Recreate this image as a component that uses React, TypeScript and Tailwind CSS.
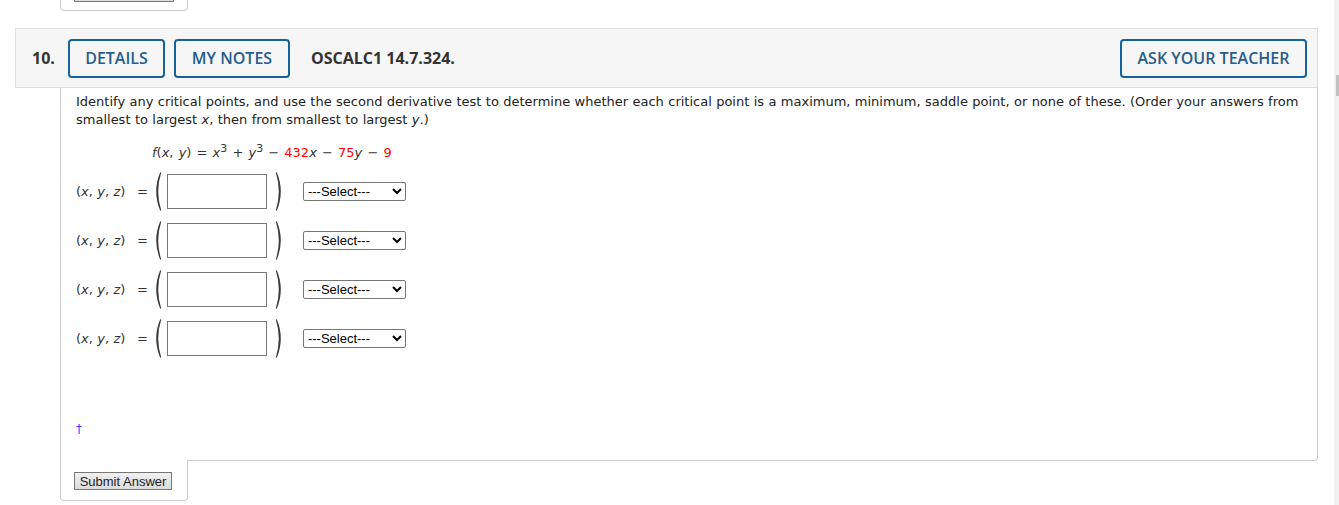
import React from 'react';

const verdana = { fontFamily: '"DejaVu Sans", Verdana, sans-serif' };

const V = ({ children }: { children: React.ReactNode }) => <i className="italic">{children}</i>;

// tall delimiters, drawn like the stretched glyphs in the reference
function Paren({ right }: { right?: boolean }) {
  return (
    <svg width="9" height="39" viewBox="0 0 9 39" className={right ? 'scale-x-[-1]' : ''}>
      <path d="M7.2 0.3 Q-0.8 19.5 7.2 38.7 L8.2 38.4 Q2.2 19.5 8.2 0.6 Z" fill="#3a3a3a" />
    </svg>
  );
}

function AnswerRow() {
  return (
    <div className="flex items-center h-[39px]">
      <span className="text-[#333] w-[61px]">
        (<V>x</V>, <V>y</V>, <V>z</V>)
      </span>
      <span className="text-[#333]">=</span>
      <div className="ml-[5px] flex">
        <Paren />
      </div>
      <input
        type="text"
        className="ml-[5px] w-[100px] h-[35px] border border-[#777] bg-white"
      />
      <div className="ml-[8px] flex">
        <Paren right />
      </div>
      <select
        className="ml-[19px] w-[103px] h-[19px] border border-[#767676] rounded-[2px] bg-white text-[13px] text-black"
        style={{ fontFamily: '"Liberation Sans", Arial, sans-serif' }}
        defaultValue=""
      >
        <option value="">---Select---</option>
        <option>maximum</option>
        <option>minimum</option>
        <option>saddle point</option>
        <option>none of these</option>
      </select>
    </div>
  );
}

function HeaderButton({ label, width }: { label: string; width: string }) {
  return (
    <button
      className={`${width} h-[39px] flex items-center justify-center border-2 border-[#15639c] rounded-[4px] text-[#275d8c] text-[16px] font-semibold uppercase`}
    >
      {label}
    </button>
  );
}

export default function App() {
  return (
    <div className="flex bg-white w-[1339px] h-[505px] overflow-hidden">
      <div className="w-[1334px]">
        {/* previous question tail */}
        <div className="ml-[60px] w-[128px] h-[11px] border-x border-b border-[#ccc] rounded-b-[4px]">
          <div className="ml-[13px] w-[100px] h-[2px] border-x border-b border-[#777] bg-[#ddd]" />
        </div>

        {/* header */}
        <div
          className="mt-[17px] ml-[15px] w-[1303px] h-[60px] border border-[#ddd] bg-[#f6f6f6] flex items-center justify-between pl-[16px] pr-[10px]"
          style={{ fontFamily: '"Open Sans", sans-serif' }}
        >
          <div className="flex items-center">
            <span className="text-[16px] font-bold text-[#333] w-[36px]">10.</span>
            <HeaderButton label="Details" width="w-[97px]" />
            <div className="w-[9px]" />
            <HeaderButton label="My Notes" width="w-[116px]" />
            <span className="ml-[21px] text-[16px] font-bold text-[#333]">OSCALC1 14.7.324.</span>
          </div>
          <HeaderButton label="Ask Your Teacher" width="w-[187px]" />
        </div>

        {/* question body */}
        <div
          className="ml-[60px] w-[1258px] h-[373px] border-x border-b border-[#ccc] rounded-br-[4px] px-[15px] pt-[5px] text-[13px] leading-[18px] text-[#222] [word-spacing:0.25px]"
          style={verdana}
        >
          <p>
            Identify any critical points, and use the second derivative test to determine whether each critical point is a
            maximum, minimum, saddle point, or none of these. (Order your answers from smallest to largest <V>x</V>, then
            from smallest to largest <V>y</V>.)
          </p>

          <div className="mt-[15px] ml-[76px] text-[#333] [word-spacing:1px]">
            <V>f</V>(<V>x</V>, <V>y</V>) = <V>x</V>
            <sup className="text-[11px]">3</sup> + <V>y</V>
            <sup className="text-[11px]">3</sup> − <span className="text-[#f00]">432</span>
            <V>x</V> − <span className="text-[#f00]">75</span>
            <V>y</V> − <span className="text-[#f00]">9</span>
          </div>

          <div className="mt-[10px] flex flex-col gap-[10px]">
            <AnswerRow />
            <AnswerRow />
            <AnswerRow />
            <AnswerRow />
          </div>

          <div className="mt-[62px] text-[12px] text-[#3a3aff]">†</div>
        </div>

        {/* submit tab */}
        <div className="relative -mt-px ml-[60px] w-[128px] h-[41px] border-x border-b border-[#ccc] rounded-b-[4px] bg-white pl-[13px] pt-[12px] flex items-start">
          <button
            className="w-[98px] h-[18px] border border-[#767676] bg-gradient-to-b from-[#f0f0f0] to-[#dcdcdc] text-[13px] text-[#222] leading-none"
            style={{ fontFamily: '"Liberation Sans", Arial, sans-serif' }}
          >
            Submit Answer
          </button>
        </div>
      </div>

      {/* scrollbar */}
      <div className="w-[5px] h-full bg-[#f1f1f1] pt-[75px] pl-[2px]">
        <div className="w-[3px] h-[21px] bg-[#c1c1c1]" />
      </div>
    </div>
  );
}
